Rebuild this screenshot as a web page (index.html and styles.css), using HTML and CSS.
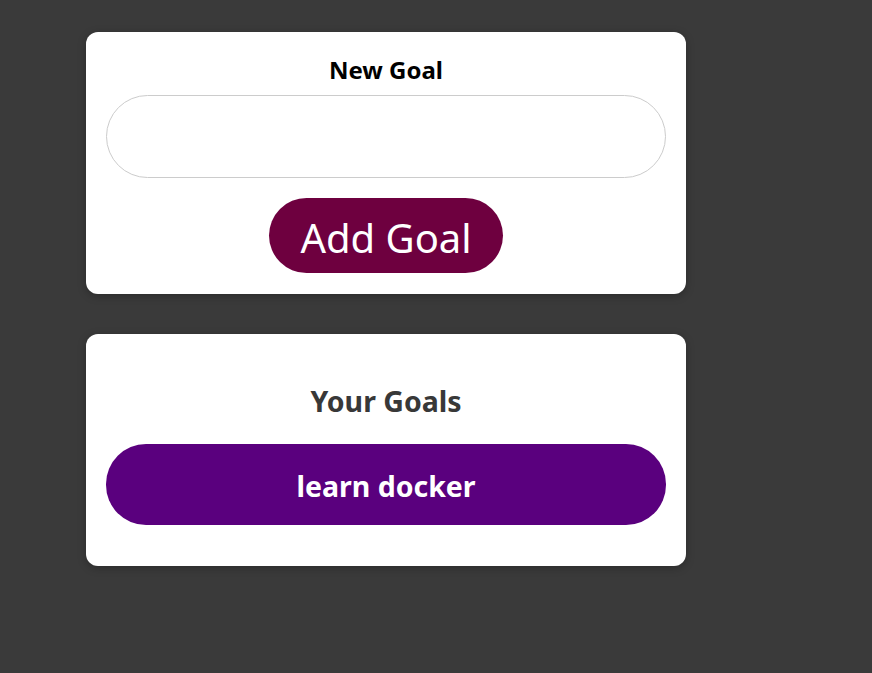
FILE: index.html
```html
<!DOCTYPE html>
<html lang="en">
<head>
<meta charset="utf-8">
<title>Goals</title>
<link rel="stylesheet" href="styles.css">
</head>
<body>
<main class="page">
  <section class="card card-form">
    <label class="label" for="goal">New Goal</label>
    <input class="input" id="goal" type="text">
    <button class="add-btn" type="button">Add Goal</button>
  </section>
  <section class="card card-goals">
    <h2 class="title">Your Goals</h2>
    <ul class="goal-list">
      <li class="goal-item">learn docker</li>
    </ul>
  </section>
</main>
</body>
</html>
```
FILE: styles.css
```css
* { box-sizing: border-box; }
html, body { margin: 0; padding: 0; }
body {
  background: #3a3a3a;
  font-family: "Noto Sans", "Open Sans", sans-serif;
  width: 872px;
  height: 673px;
  overflow: hidden;
}
.page {
  padding: 32px 0 0 86px;
  display: flex;
  flex-direction: column;
  gap: 40px;
}
.card {
  width: 600px;
  background: #ffffff;
  border-radius: 12px;
  box-shadow: 0 2px 8px rgba(0, 0, 0, 0.26);
  padding: 20px;
  display: flex;
  flex-direction: column;
  align-items: center;
}
.card-form { height: 262px; }
.label {
  font-weight: 700;
  font-size: 24px;
  line-height: 36px;
  color: #000;
  margin-bottom: 7px;
}
.input {
  width: 560px;
  height: 83px;
  border: 1px solid #cccccc;
  border-radius: 42px;
  font: inherit;
  outline: none;
  padding: 0 24px;
}
.add-btn {
  margin-top: 20px;
  height: 75px;
  padding: 3px 31px 0;
  border: none;
  border-radius: 38px;
  background: #6e003f;
  color: #ffffff;
  font-family: inherit;
  font-size: 40px;
  font-weight: 400;
  cursor: pointer;
}
.card-goals { height: 232px; }
.title {
  margin: 27px 0 0 0;
  height: 40px;
  line-height: 40px;
  font-size: 28.5px;
  font-weight: 700;
  color: #383838;
}
.goal-list {
  list-style: none;
  margin: 23px 0 0 0;
  padding: 0;
  width: 560px;
}
.goal-item {
  height: 81px;
  padding-top: 3px;
  border-radius: 40px;
  background: #5a007e;
  color: #ffffff;
  font-size: 28.5px;
  font-weight: 700;
  display: flex;
  align-items: center;
  justify-content: center;
}
```
